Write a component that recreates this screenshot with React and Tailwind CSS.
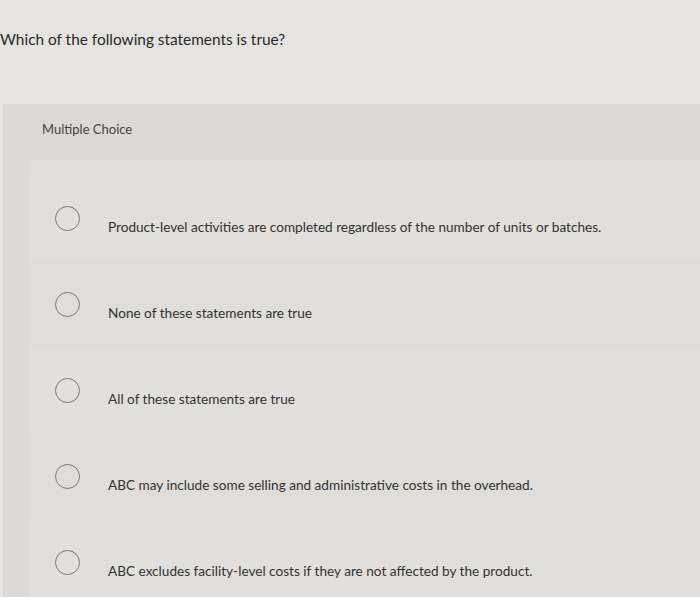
import React from "react";

const options = [
  "Product-level activities are completed regardless of the number of units or batches.",
  "None of these statements are true",
  "All of these statements are true",
  "ABC may include some selling and administrative costs in the overhead.",
  "ABC excludes facility-level costs if they are not affected by the product.",
];

export default function App() {
  return (
    <div
      className="w-[700px] h-[597px] overflow-hidden bg-[#e6e4e1] text-[#343434]"
      style={{ fontFamily: "Lato, 'Open Sans', sans-serif" }}
    >
      <div className="pt-[27px] h-[104px]">
        <p className="text-[15.4px] leading-[24px] text-[#2a2a2a]">
          Which of the following statements is true?
        </p>
      </div>
      <div className="ml-[3px] h-[493px] bg-[#dcdad6] flex flex-col overflow-hidden">
        <div className="pl-[39px] pt-[16px] h-[56px] shrink-0">
          <p className="text-[13px] leading-[18px] text-[#444]">Multiple Choice</p>
        </div>
        <div className="ml-[27px] pt-[15px] bg-[#e0ded9] flex-1 flex flex-col">
          {options.map((o, i) => (
            <div
              key={i}
              className={`h-[86px] shrink-0 flex items-center ${i % 2 === 0 ? "bg-[#e2e0dc]" : "bg-[#e0ded9]"}`}
            >
              <div className="ml-[25px] w-[25px] h-[25px] rounded-full border-[1.5px] border-[#7a7a7a] shrink-0" />
              <p className="ml-[28px] mt-[17px] text-[13.6px] leading-[18px] text-[#333]">{o}</p>
            </div>
          ))}
        </div>
      </div>
    </div>
  );
}
